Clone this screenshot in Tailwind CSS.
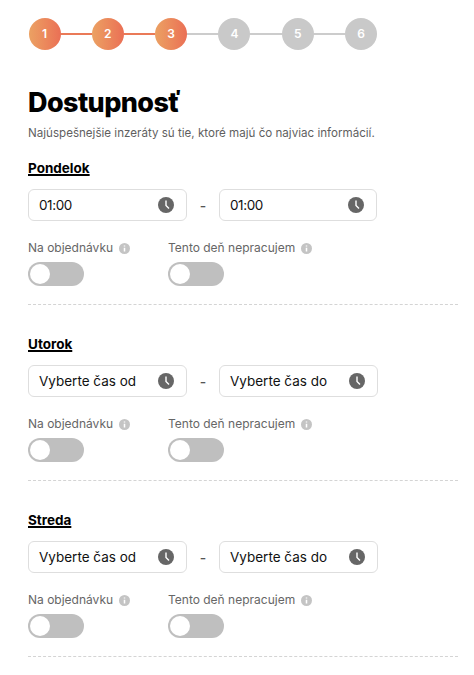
<!DOCTYPE html>
<html lang="sk">
<head>
    <meta charset="UTF-8">
    <meta name="viewport" content="width=device-width, initial-scale=1.0">
    <title>Dostupnosť</title>
    <script src="https://cdn.jsdelivr.net/npm/@tailwindcss/browser@4"></script>
</head>
<body class="bg-white font-['Inter',sans-serif] overflow-hidden">
    <div class="h-[675px] w-[474px] overflow-hidden pl-[28px] pr-[16px] pt-[18px]">
        <!-- Stepper -->
        <div class="flex items-center pl-[0.5px]">
            <div class="flex h-[32px] w-[32px] items-center justify-center rounded-full bg-gradient-to-r from-[#eba163] to-[#ea6f55] text-[12px] font-semibold text-white">1</div>
            <div class="h-[2px] w-[31.3px] bg-[#ea7a58]"></div>
            <div class="flex h-[32px] w-[32px] items-center justify-center rounded-full bg-gradient-to-r from-[#eba163] to-[#ea6f55] text-[12px] font-semibold text-white">2</div>
            <div class="h-[2px] w-[31.3px] bg-[#ea7a58]"></div>
            <div class="flex h-[32px] w-[32px] items-center justify-center rounded-full bg-gradient-to-r from-[#eba163] to-[#ea6f55] text-[12px] font-semibold text-white">3</div>
            <div class="h-[2px] w-[31.3px] bg-[#cccccc]"></div>
            <div class="flex h-[32px] w-[32px] items-center justify-center rounded-full bg-[#c9c9c9] text-[12px] font-semibold text-white">4</div>
            <div class="h-[2px] w-[31.3px] bg-[#cccccc]"></div>
            <div class="flex h-[32px] w-[32px] items-center justify-center rounded-full bg-[#c9c9c9] text-[12px] font-semibold text-white">5</div>
            <div class="h-[2px] w-[31.3px] bg-[#cccccc]"></div>
            <div class="flex h-[32px] w-[32px] items-center justify-center rounded-full bg-[#c9c9c9] text-[12px] font-semibold text-white">6</div>
        </div>

        <h1 class="mt-[35px] text-[27px] leading-[36px] font-extrabold tracking-[-0.6px] text-black">Dostupnosť</h1>
        <p class="mt-[3px] text-[11.6px] leading-[18px] text-[#5f5f5f]">Najúspešnejšie inzeráty sú tie, ktoré majú čo najviac informácií.</p>

        <!-- Pondelok -->
        <section class="mt-[17px] h-[176px]">
            <h2 class="text-[13.5px] leading-[18px] font-bold text-black underline decoration-[1.5px]">Pondelok</h2>
            <div class="mt-[12px] flex items-center">
                <div class="flex h-[32px] w-[159px] items-center justify-between rounded-[6px] border border-[#dedede] pl-[10px] pr-[12px] text-[13.5px] text-[#111]">
                    <span class="tracking-[-0.4px]">01:00</span>
                    <svg class="h-[16px] w-[16px]" viewBox="0 0 16 16"><circle cx="8" cy="8" r="8" fill="#666"/><path d="M8 3.5V8.5L11 11.5" fill="none" stroke="#fff" stroke-width="1.4"/></svg>
                </div>
                <span class="w-[32px] text-center text-[14px] font-medium text-[#555]">-</span>
                <div class="flex h-[32px] w-[158px] items-center justify-between rounded-[6px] border border-[#dedede] pl-[10px] pr-[12px] text-[13.5px] text-[#111]">
                    <span class="tracking-[-0.4px]">01:00</span>
                    <svg class="h-[16px] w-[16px]" viewBox="0 0 16 16"><circle cx="8" cy="8" r="8" fill="#666"/><path d="M8 3.5V8.5L11 11.5" fill="none" stroke="#fff" stroke-width="1.4"/></svg>
                </div>
            </div>
            <div class="mt-[18px] flex">
                <div class="w-[140px]">
                    <div class="flex items-center gap-[6px] text-[12px] leading-[18px] text-[#666]">Na objednávku
                        <svg class="h-[11px] w-[11px]" viewBox="0 0 11 11"><circle cx="5.5" cy="5.5" r="5.5" fill="#c4c4c4"/><path d="M5.5 2.4V3.6M5.5 4.8V8.6" stroke="#fff" stroke-width="1.5"/></svg>
                    </div>
                    <div class="mt-[5px] flex h-[24px] w-[56px] items-center rounded-full bg-[#bfbfbf] pl-[2px]"><div class="h-[20px] w-[20px] rounded-full bg-white"></div></div>
                </div>
                <div>
                    <div class="flex items-center gap-[6px] text-[12px] leading-[18px] text-[#666]">Tento deň nepracujem
                        <svg class="h-[11px] w-[11px]" viewBox="0 0 11 11"><circle cx="5.5" cy="5.5" r="5.5" fill="#c4c4c4"/><path d="M5.5 2.4V3.6M5.5 4.8V8.6" stroke="#fff" stroke-width="1.5"/></svg>
                    </div>
                    <div class="mt-[5px] flex h-[24px] w-[56px] items-center rounded-full bg-[#bfbfbf] pl-[2px]"><div class="h-[20px] w-[20px] rounded-full bg-white"></div></div>
                </div>
            </div>
            <div class="mt-[18px] border-t border-dashed border-[#d4d4d4]"></div>
        </section>

        <!-- Utorok -->
        <section class="h-[176px]">
            <h2 class="text-[13.5px] leading-[18px] font-bold text-black underline decoration-[1.5px]">Utorok</h2>
            <div class="mt-[12px] flex items-center">
                <div class="flex h-[32px] w-[159px] items-center justify-between rounded-[6px] border border-[#dedede] pl-[10px] pr-[12px] text-[13.5px] text-[#111]">
                    <span>Vyberte čas od</span>
                    <svg class="h-[16px] w-[16px]" viewBox="0 0 16 16"><circle cx="8" cy="8" r="8" fill="#666"/><path d="M8 3.5V8.5L11 11.5" fill="none" stroke="#fff" stroke-width="1.4"/></svg>
                </div>
                <span class="w-[32px] text-center text-[14px] font-medium text-[#555]">-</span>
                <div class="flex h-[32px] w-[159px] items-center justify-between rounded-[6px] border border-[#dedede] pl-[10px] pr-[12px] text-[13.5px] text-[#111]">
                    <span>Vyberte čas do</span>
                    <svg class="h-[16px] w-[16px]" viewBox="0 0 16 16"><circle cx="8" cy="8" r="8" fill="#666"/><path d="M8 3.5V8.5L11 11.5" fill="none" stroke="#fff" stroke-width="1.4"/></svg>
                </div>
            </div>
            <div class="mt-[18px] flex">
                <div class="w-[140px]">
                    <div class="flex items-center gap-[6px] text-[12px] leading-[18px] text-[#666]">Na objednávku
                        <svg class="h-[11px] w-[11px]" viewBox="0 0 11 11"><circle cx="5.5" cy="5.5" r="5.5" fill="#c4c4c4"/><path d="M5.5 2.4V3.6M5.5 4.8V8.6" stroke="#fff" stroke-width="1.5"/></svg>
                    </div>
                    <div class="mt-[5px] flex h-[24px] w-[56px] items-center rounded-full bg-[#bfbfbf] pl-[2px]"><div class="h-[20px] w-[20px] rounded-full bg-white"></div></div>
                </div>
                <div>
                    <div class="flex items-center gap-[6px] text-[12px] leading-[18px] text-[#666]">Tento deň nepracujem
                        <svg class="h-[11px] w-[11px]" viewBox="0 0 11 11"><circle cx="5.5" cy="5.5" r="5.5" fill="#c4c4c4"/><path d="M5.5 2.4V3.6M5.5 4.8V8.6" stroke="#fff" stroke-width="1.5"/></svg>
                    </div>
                    <div class="mt-[5px] flex h-[24px] w-[56px] items-center rounded-full bg-[#bfbfbf] pl-[2px]"><div class="h-[20px] w-[20px] rounded-full bg-white"></div></div>
                </div>
            </div>
            <div class="mt-[18px] border-t border-dashed border-[#d4d4d4]"></div>
        </section>

        <!-- Streda -->
        <section>
            <h2 class="text-[13.5px] leading-[18px] font-bold text-black underline decoration-[1.5px]">Streda</h2>
            <div class="mt-[12px] flex items-center">
                <div class="flex h-[32px] w-[159px] items-center justify-between rounded-[6px] border border-[#dedede] pl-[10px] pr-[12px] text-[13.5px] text-[#111]">
                    <span>Vyberte čas od</span>
                    <svg class="h-[16px] w-[16px]" viewBox="0 0 16 16"><circle cx="8" cy="8" r="8" fill="#666"/><path d="M8 3.5V8.5L11 11.5" fill="none" stroke="#fff" stroke-width="1.4"/></svg>
                </div>
                <span class="w-[32px] text-center text-[14px] font-medium text-[#555]">-</span>
                <div class="flex h-[32px] w-[159px] items-center justify-between rounded-[6px] border border-[#dedede] pl-[10px] pr-[12px] text-[13.5px] text-[#111]">
                    <span>Vyberte čas do</span>
                    <svg class="h-[16px] w-[16px]" viewBox="0 0 16 16"><circle cx="8" cy="8" r="8" fill="#666"/><path d="M8 3.5V8.5L11 11.5" fill="none" stroke="#fff" stroke-width="1.4"/></svg>
                </div>
            </div>
            <div class="mt-[18px] flex">
                <div class="w-[140px]">
                    <div class="flex items-center gap-[6px] text-[12px] leading-[18px] text-[#666]">Na objednávku
                        <svg class="h-[11px] w-[11px]" viewBox="0 0 11 11"><circle cx="5.5" cy="5.5" r="5.5" fill="#c4c4c4"/><path d="M5.5 2.4V3.6M5.5 4.8V8.6" stroke="#fff" stroke-width="1.5"/></svg>
                    </div>
                    <div class="mt-[5px] flex h-[24px] w-[56px] items-center rounded-full bg-[#bfbfbf] pl-[2px]"><div class="h-[20px] w-[20px] rounded-full bg-white"></div></div>
                </div>
                <div>
                    <div class="flex items-center gap-[6px] text-[12px] leading-[18px] text-[#666]">Tento deň nepracujem
                        <svg class="h-[11px] w-[11px]" viewBox="0 0 11 11"><circle cx="5.5" cy="5.5" r="5.5" fill="#c4c4c4"/><path d="M5.5 2.4V3.6M5.5 4.8V8.6" stroke="#fff" stroke-width="1.5"/></svg>
                    </div>
                    <div class="mt-[5px] flex h-[24px] w-[56px] items-center rounded-full bg-[#bfbfbf] pl-[2px]"><div class="h-[20px] w-[20px] rounded-full bg-white"></div></div>
                </div>
            </div>
            <div class="mt-[18px] border-t border-dashed border-[#d4d4d4]"></div>
        </section>
    </div>
</body>
</html>
